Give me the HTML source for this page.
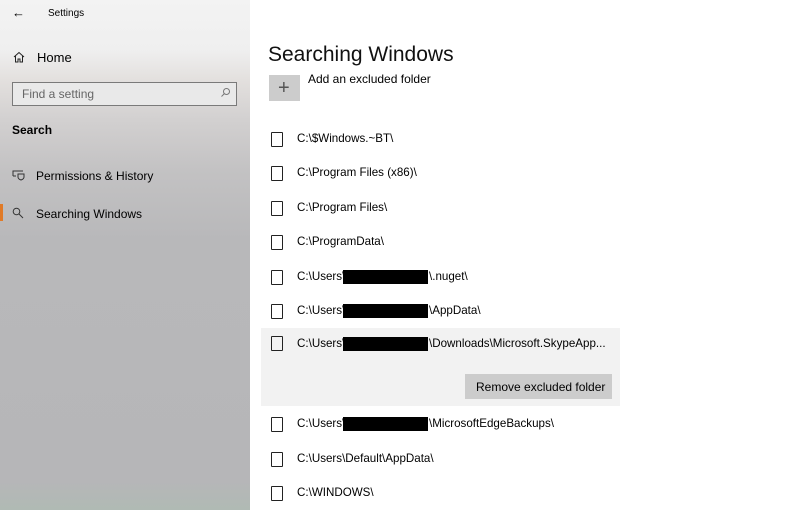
<!DOCTYPE html>
<html><head><style>
body{margin:0;width:800px;height:510px;overflow:hidden;background:#fff;font-family:"Liberation Sans",sans-serif;position:relative}
.side{position:absolute;left:0;top:0;width:250px;height:510px;background:linear-gradient(180deg,#f3f3f3 0px,#efefef 50px,#e3e0de 80px,#d2d0d0 120px,#c3c2c3 170px,#b8b8ba 240px,#b6b6b8 480px,#b0bab4 510px)}
.t{position:absolute;font-size:12px;color:#000;white-space:nowrap}
.p{font-size:11.6px}
.ic{position:absolute;width:10px;height:13px;border:1.3px solid #222;border-radius:1px}
.r{position:absolute;background:#000;height:14px;left:343px;width:85px}
</style></head><body>
<div class="side"></div>
<div class="t" style="left:12px;top:5px;font-size:13px">←</div>
<div class="t" style="left:48px;top:8px;font-size:10px">Settings</div>
<svg style="position:absolute;left:13px;top:51px" width="12" height="12" viewBox="0 0 12 12"><path d="M1 6L6 1.5 11 6M2.5 5v6h2.5v-3h2v3h2.5V5" fill="none" stroke="#222" stroke-width="1"/></svg>
<div class="t" style="left:37px;top:50px;font-size:13px">Home</div>
<div style="position:absolute;left:12px;top:82px;width:223px;height:22px;border:1px solid #7a7a7a;background:#e9e9e9"></div>
<div class="t" style="left:22px;top:87px;color:#666">Find a setting</div>
<svg style="position:absolute;left:220px;top:87px" width="11" height="11" viewBox="0 0 11 11"><circle cx="6.5" cy="4.5" r="3" fill="none" stroke="#777"/><path d="M4.5 6.5L1.5 9.5" stroke="#777"/></svg>
<div class="t" style="left:12px;top:123px;font-weight:bold">Search</div>
<svg style="position:absolute;left:12px;top:170px" width="14" height="11" viewBox="0 0 14 11"><path d="M1 6V1h10M1 6h3" fill="none" stroke="#333"/><path d="M6 4h6v3c0 2-3 3-3 3s-3-1-3-3z" fill="none" stroke="#333"/></svg>
<div class="t" style="left:36px;top:169px">Permissions &amp; History</div>
<div style="position:absolute;left:0;top:204px;width:3px;height:17px;background:#e07a27"></div>
<svg style="position:absolute;left:12px;top:207px" width="12" height="12" viewBox="0 0 12 12"><circle cx="4.5" cy="4.5" r="3.3" fill="none" stroke="#333"/><path d="M7 7l4 4" stroke="#333"/></svg>
<div class="t" style="left:36px;top:207px">Searching Windows</div>
<div class="t" style="left:268px;top:43px;font-size:21px;color:#111">Searching Windows</div>
<div style="position:absolute;left:269px;top:75px;width:31px;height:26px;background:#ccc"></div>
<div class="t" style="left:278px;top:77px;font-size:20px;font-weight:300;color:#555">+</div>
<div class="t" style="left:308px;top:72px">Add an excluded folder</div>
<div style="position:absolute;left:261px;top:328px;width:359px;height:78px;background:#f2f2f2"></div>
<div style="position:absolute;left:465px;top:374px;width:147px;height:25px;background:#ccc"></div>
<div class="t" style="left:476px;top:380px">Remove excluded folder</div>

<div class="ic" style="left:271px;top:132px"></div><div class="t p" style="left:297px;top:132px">C:\$Windows.~BT\</div>
<div class="ic" style="left:271px;top:166px"></div><div class="t p" style="left:297px;top:166px">C:\Program Files (x86)\</div>
<div class="ic" style="left:271px;top:201px"></div><div class="t p" style="left:297px;top:201px">C:\Program Files\</div>
<div class="ic" style="left:271px;top:235px"></div><div class="t p" style="left:297px;top:235px">C:\ProgramData\</div>
<div class="ic" style="left:271px;top:270px"></div><div class="t p" style="left:297px;top:270px">C:\Users\</div><div class="t p" style="left:429px;top:270px">\.nuget\</div><div class="r" style="top:270px"></div>
<div class="ic" style="left:271px;top:304px"></div><div class="t p" style="left:297px;top:304px">C:\Users\</div><div class="t p" style="left:429px;top:304px">\AppData\</div><div class="r" style="top:304px"></div>
<div class="ic" style="left:271px;top:336px"></div><div class="t p" style="left:297px;top:337px">C:\Users\</div><div class="t p" style="left:429px;top:337px">\Downloads\Microsoft.SkypeApp...</div><div class="r" style="top:337px"></div>
<div class="ic" style="left:271px;top:417px"></div><div class="t p" style="left:297px;top:417px">C:\Users\</div><div class="t p" style="left:429px;top:417px">\MicrosoftEdgeBackups\</div><div class="r" style="top:417px"></div>
<div class="ic" style="left:271px;top:452px"></div><div class="t p" style="left:297px;top:452px">C:\Users\Default\AppData\</div>
<div class="ic" style="left:271px;top:486px"></div><div class="t p" style="left:297px;top:486px">C:\WINDOWS\</div>
</body></html>
